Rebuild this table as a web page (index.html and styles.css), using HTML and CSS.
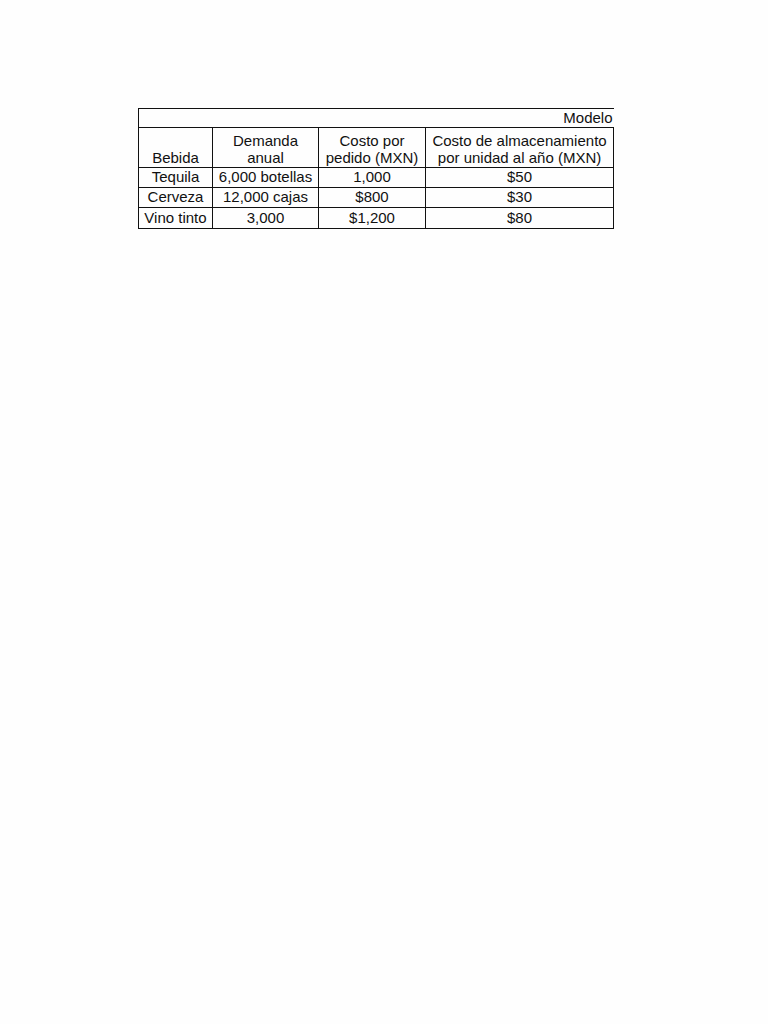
FILE: index.html
```html
<!DOCTYPE html>
<html lang="es">
<head>
<meta charset="utf-8">
<link rel="stylesheet" href="styles.css">
</head>
<body>
<table class="sheet">
  <colgroup>
    <col class="c1"><col class="c2"><col class="c3"><col class="c4">
  </colgroup>
  <tr class="title-row">
    <td class="title" colspan="4">Modelo</td>
  </tr>
  <tr class="head-row">
    <td>Bebida</td>
    <td>Demanda<br>anual</td>
    <td>Costo por<br>pedido (MXN)</td>
    <td>Costo de almacenamiento<br>por unidad al año (MXN)</td>
  </tr>
  <tr class="data-row">
    <td>Tequila</td><td>6,000 botellas</td><td>1,000</td><td>$50</td>
  </tr>
  <tr class="data-row">
    <td>Cerveza</td><td>12,000 cajas</td><td>$800</td><td>$30</td>
  </tr>
  <tr class="data-row last">
    <td>Vino tinto</td><td>3,000</td><td>$1,200</td><td>$80</td>
  </tr>
</table>
</body>
</html>
```
FILE: styles.css
```css
html, body {
  margin: 0;
  padding: 0;
  background: #fefefe;
}
body {
  padding: 108px 0 0 138px;
  font-family: "Liberation Sans", Arial, sans-serif;
  font-size: 15px;
  color: #111;
}
.sheet {
  border-collapse: collapse;
  table-layout: fixed;
  width: 475px;
}
.c1 { width: 74px; }
.c2 { width: 106px; }
.c3 { width: 107px; }
.c4 { width: 188px; }
.sheet td {
  border: 1px solid #111;
  padding: 0 1px;
  text-align: center;
  vertical-align: bottom;
  line-height: 17px;
  white-space: nowrap;
  overflow: hidden;
}
.title-row td {
  height: 18px;
  text-align: right;
  border-right: none;
  padding-right: 1px;
  padding-bottom: 1px;
  box-sizing: border-box;
}
.head-row td {
  height: 40px;
  line-height: 17px;
  padding-bottom: 1px;
  box-sizing: border-box;
}
.data-row td {
  height: 20px;
  line-height: 17px;
  padding-top: 0;
  padding-bottom: 2px;
  box-sizing: border-box;
  vertical-align: middle;
}
.data-row.last td {
  height: 21px;
}
```
